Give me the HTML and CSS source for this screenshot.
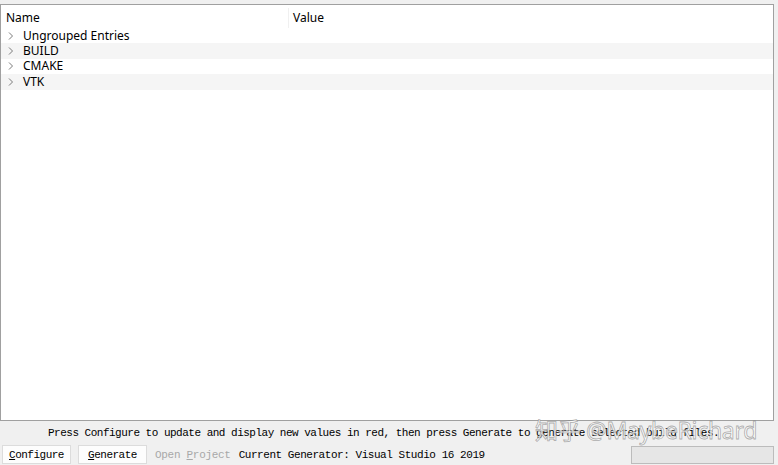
FILE: index.html
```html
<!DOCTYPE html>
<html>
<head>
<meta charset="utf-8">
<link rel="stylesheet" href="styles.css">
</head>
<body>
<div class="app">
  <div class="tree">
    <div class="header">
      <div class="col-name">Name</div>
      <div class="col-value">Value</div>
    </div>
    <div class="row"><span class="arrow"><svg width="6" height="8" viewBox="0 0 6 8"><path d="M1 0.5 L4.5 4 L1 7.5" fill="none" stroke="#7a7a7a" stroke-width="1"/></svg></span><span class="label">Ungrouped Entries</span></div>
    <div class="row alt"><span class="arrow"><svg width="6" height="8" viewBox="0 0 6 8"><path d="M1 0.5 L4.5 4 L1 7.5" fill="none" stroke="#7a7a7a" stroke-width="1"/></svg></span><span class="label">BUILD</span></div>
    <div class="row"><span class="arrow"><svg width="6" height="8" viewBox="0 0 6 8"><path d="M1 0.5 L4.5 4 L1 7.5" fill="none" stroke="#7a7a7a" stroke-width="1"/></svg></span><span class="label">CMAKE</span></div>
    <div class="row alt"><span class="arrow"><svg width="6" height="8" viewBox="0 0 6 8"><path d="M1 0.5 L4.5 4 L1 7.5" fill="none" stroke="#7a7a7a" stroke-width="1"/></svg></span><span class="label">VTK</span></div>
  </div>
  <div class="status">Press Configure to update and display new values in red, then press Generate to generate selected build files.</div>
  <div class="buttons">
    <button class="btn"><u>C</u>onfigure</button>
    <button class="btn"><u>G</u>enerate</button>
    <span class="disabled">Open <u>P</u>roject</span>
    <span class="gen">Current Generator: Visual Studio 16 2019</span>
    <div class="progress"></div>
  </div>
  <div class="watermark">知乎 @MaybeRichard</div>
</div>
</body>
</html>
```
FILE: styles.css
```css
html, body {
  margin: 0;
  padding: 0;
  background: #f0f0f0;
}
.app {
  position: relative;
  width: 778px;
  height: 465px;
  padding-top: 4px;
  box-sizing: border-box;
  font-family: "Noto Sans", "Noto Sans CJK SC", sans-serif;
  font-size: 12px;
  color: #000;
}
.tree {
  width: 774px;
  height: 417px;
  box-sizing: border-box;
  border: 1px solid #a0a0a0;
  background: #fff;
  padding-top: 3px;
}
.header {
  display: flex;
  height: 20px;
  align-items: center;
}
.col-name {
  width: 282px;
  padding-left: 5px;
  border-right: 1px solid #f0f0f0;
  height: 20px;
  line-height: 20px;
}
.col-value {
  padding-left: 4px;
  line-height: 20px;
}
.row {
  height: 15.4px;
  display: flex;
  align-items: center;
  padding-left: 7px;
  overflow: hidden;
}
.label {
  display: block;
  line-height: 14px;
  height: 14px;
}
.row.alt {
  background: #f5f5f5;
}
.arrow {
  width: 15px;
  display: inline-flex;
  align-items: center;
}
.status {
  font-family: "Liberation Mono", "DejaVu Sans Mono", monospace;
  font-size: 11px;
  letter-spacing: -0.5px;
  height: 22px;
  line-height: 22px;
  padding-left: 48px;
  margin-top: 1px;
  white-space: nowrap;
}
.buttons {
  display: flex;
  align-items: center;
  height: 21px;
  font-family: "Liberation Mono", "DejaVu Sans Mono", monospace;
  font-size: 11px;
  letter-spacing: -0.5px;
}
.btn {
  font: inherit;
  letter-spacing: inherit;
  height: 19px;
  width: 69px;
  margin-left: 2px;
  margin-right: 7px;
  padding: 0;
  border: 1px solid #dcdcdc;
  background: #fdfdfd;
  color: #000;
}
.btn + .btn {
  margin-left: 0;
  margin-right: 8px;
}
.disabled {
  color: #a8a8a8;
  margin-right: 8px;
  letter-spacing: -0.3px;
}
.gen {
  flex: 1;
  letter-spacing: -0.45px;
}
.progress {
  width: 143px;
  height: 18px;
  box-sizing: border-box;
  border: 1px solid #bcbcbc;
  background: #e6e6e6;
  margin-right: 4px;
}
.watermark {
  position: absolute;
  left: 535px;
  top: 412px;
  font-family: "Noto Sans", "Noto Sans CJK SC", sans-serif;
  font-size: 23px;
  letter-spacing: -0.3px;
  color: rgba(255, 255, 255, 0.8);
  -webkit-text-stroke: 0.8px rgba(130, 130, 130, 0.65);
  white-space: nowrap;
}
```
